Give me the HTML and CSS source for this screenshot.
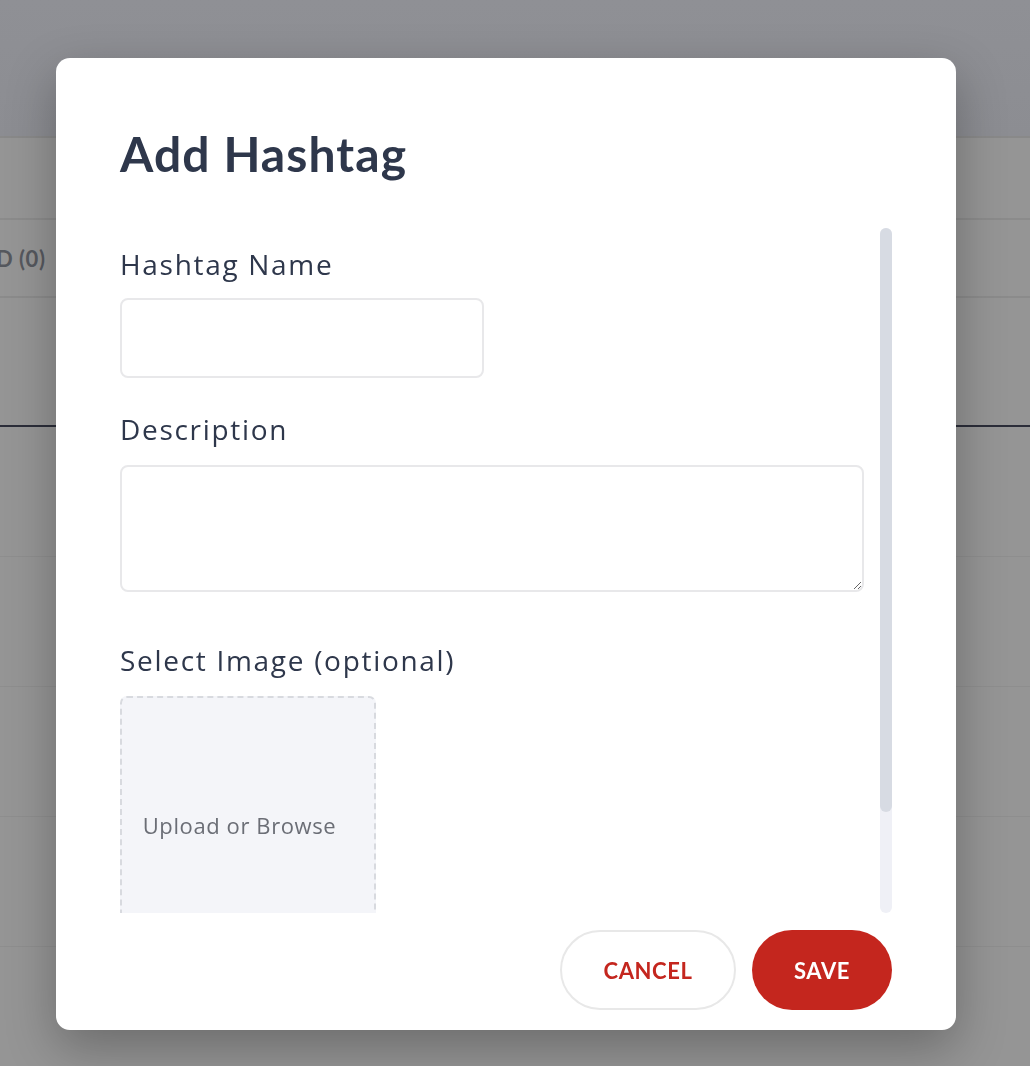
FILE: index.html
```html
<!DOCTYPE html>
<html lang="en">
<head>
<meta charset="utf-8">
<title>Add Hashtag</title>
<link rel="stylesheet" href="styles.css">
</head>
<body>
<div class="page">
  <div class="page-header"></div>
  <div class="page-bar"></div>
  <div class="page-tabs"><span class="tab-label">D (0)</span></div>
  <div class="page-filter"></div>
  <div class="page-row"></div>
  <div class="page-row"></div>
  <div class="page-row"></div>
  <div class="page-row"></div>
  <div class="page-row"></div>
</div>

<div class="modal">
  <h1 class="modal-title">Add Hashtag</h1>
  <div class="modal-body">
    <div class="modal-content">
      <div class="field">
        <label class="field-label" for="name">Hashtag Name</label>
        <input class="text-input" id="name" type="text">
      </div>
      <div class="field field-desc">
        <label class="field-label" for="desc">Description</label>
        <textarea class="text-area" id="desc"></textarea>
      </div>
      <div class="field field-image">
        <span class="field-label">Select Image (optional)</span>
        <div class="upload-box">Upload or Browse</div>
      </div>
    </div>
    <div class="scroll-track"><div class="scroll-thumb"></div></div>
  </div>
  <div class="modal-footer">
    <button class="btn btn-cancel" type="button">CANCEL</button>
    <button class="btn btn-save" type="button">SAVE</button>
  </div>
</div>
</body>
</html>
```
FILE: styles.css
```css
html, body {
  margin: 0;
  padding: 0;
}
body {
  background: #959595;
  font-family: "Open Sans", Lato, sans-serif;
  overflow: hidden;
  height: 1066px;
}
.page-header {
  height: 138px;
  background: linear-gradient(180deg, #8f9095 0%, #8c8d92 100%);
  border-bottom: 2px solid #898989;
  box-sizing: border-box;
}
.page-bar {
  height: 82px;
  border-bottom: 2px solid #8b8b8b;
  box-sizing: border-box;
}
.page-tabs {
  height: 78px;
  border-bottom: 2px solid #8b8b8b;
  box-sizing: border-box;
  display: flex;
  align-items: center;
  overflow: hidden;
}
.tab-label {
  margin-left: -4px;
  font-family: Lato, sans-serif;
  font-weight: 700;
  font-size: 22px;
  letter-spacing: 0.5px;
  color: #55585e;
}
.page-filter {
  height: 129px;
  border-bottom: 2px solid #2b2d39;
  box-sizing: border-box;
}
.page-row {
  height: 130px;
  border-bottom: 1px solid #8e8e8e;
  box-sizing: border-box;
}

.modal {
  position: fixed;
  left: 56px;
  top: 58px;
  width: 900px;
  height: 972px;
  box-sizing: border-box;
  background: #ffffff;
  border-radius: 14px;
  box-shadow: 0 18px 50px rgba(0, 0, 0, 0.28);
  padding: 0 64px 20px 64px;
  display: flex;
  flex-direction: column;
  color: #2e374b;
}
.modal-title {
  margin: 0 0 46px 0;
  padding-top: 68px;
  font-family: Lato, sans-serif;
  font-size: 48px;
  line-height: 56px;
  font-weight: 700;
  letter-spacing: 1.1px;
  color: #2e374b;
}
.modal-body {
  flex: 1;
  min-height: 0;
  display: flex;
  gap: 16px;
}
.modal-content {
  flex: 1;
  overflow: hidden;
}
.scroll-track {
  width: 12px;
  flex: none;
  background: #eff0f6;
  border-radius: 6px;
  display: flex;
  flex-direction: column;
}
.scroll-thumb {
  height: 584px;
  background: #d7dbe3;
  border-radius: 6px;
}
.field {
  display: flex;
  flex-direction: column;
  align-items: flex-start;
}
.field:first-child {
  padding-top: 18px;
}
.field-label {
  display: block;
  font-size: 28px;
  line-height: 36px;
  letter-spacing: 1.7px;
  margin-bottom: 16px;
  color: #2e374b;
}
.field-desc {
  margin-top: 33px;
}
.field-desc .field-label {
  margin-bottom: 18px;
}
.field-image {
  margin-top: 50px;
}
.field-image .field-label {
  margin-bottom: 18px;
}
.text-input {
  display: block;
  width: 364px;
  height: 80px;
  box-sizing: border-box;
  border: 2px solid #e8e8ea;
  border-radius: 8px;
  background: #fff;
  font: inherit;
  outline: none;
}
.text-area {
  display: block;
  width: 744px;
  height: 127px;
  box-sizing: border-box;
  border: 2px solid #e8e8ea;
  border-radius: 8px;
  background: #fff;
  font: inherit;
  outline: none;
  resize: vertical;
}
.upload-box {
  width: 256px;
  height: 256px;
  box-sizing: border-box;
  border: 2px dashed #d8dadf;
  border-radius: 7px;
  background: #f4f5f9;
  display: flex;
  align-items: center;
  justify-content: center;
  padding-right: 17px;
  padding-top: 2px;
  font-size: 22px;
  letter-spacing: 0.6px;
  color: #6b6e76;
}
.modal-footer {
  display: flex;
  justify-content: flex-end;
  gap: 16px;
  padding-top: 17px;
}
.btn {
  height: 80px;
  border-radius: 40px;
  font-family: Lato, sans-serif;
  font-weight: 700;
  font-size: 22px;
  letter-spacing: 0.6px;
  padding-top: 2px;
  cursor: pointer;
}
.btn-cancel {
  width: 176px;
  background: #fff;
  border: 2px solid #e8e8e8;
  color: #c4261e;
}
.btn-save {
  width: 140px;
  background: #c4261e;
  border: none;
  color: #fff;
}
```
